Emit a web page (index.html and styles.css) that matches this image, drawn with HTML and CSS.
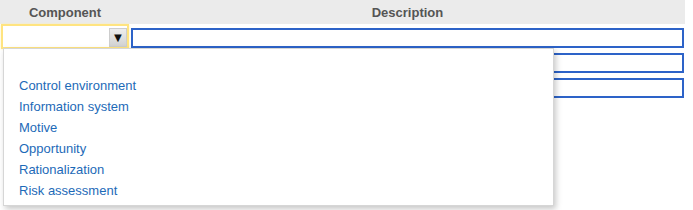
FILE: index.html
```html
<!DOCTYPE html>
<html lang="en">
<head>
    <meta charset="UTF-8">
    <title>Components</title>
    <link rel="stylesheet" href="styles.css">
</head>
<body>
    <div class="grid">
        <div class="head">Component</div>
        <div class="head">Description</div>

        <div class="cell cell-combo">
            <div class="combo focused">
                <span class="combo-text"></span>
                <span class="combo-btn">&#9660;</span>
            </div>
            <ul class="dropdown">
                <li class="empty">&nbsp;</li>
                <li>Control environment</li>
                <li>Information system</li>
                <li>Motive</li>
                <li>Opportunity</li>
                <li>Rationalization</li>
                <li>Risk assessment</li>
            </ul>
        </div>
        <div class="cell"><input class="desc" type="text"></div>

        <div class="cell"></div>
        <div class="cell"><input class="desc" type="text"></div>

        <div class="cell"></div>
        <div class="cell"><input class="desc" type="text"></div>
    </div>
</body>
</html>
```

FILE: styles.css
```css
* {
    margin: 0;
    padding: 0;
    box-sizing: border-box;
}

html, body {
    min-height: 210px;
}

body {
    font-family: "Liberation Sans", Arial, sans-serif;
    font-size: 13px;
    background: white;
}

.grid {
    display: grid;
    grid-template-columns: 130px 555px;
    grid-auto-rows: 25px;
    grid-template-rows: 24px;
    width: 685px;
}

.head {
    background: #ebebeb;
    color: #555;
    font-weight: bold;
    text-align: center;
    line-height: 26px;
}

.cell {
    padding: 0 1px;
}

.cell-combo {
    position: relative;
}

.combo {
    display: flex;
    justify-content: flex-end;
    height: 25px;
    width: 128px;
    background: white;
    border: 2px solid #ffe480;
    box-shadow: 0 0 2px #fff0b0;
    padding: 2px 0 1px 0;
}

.combo-btn {
    width: 18px;
    height: 19px;
    background: linear-gradient(#eeeeee, #d2d2d2);
    border: 1px solid #cdcdcd;
    color: #111;
    font-size: 13px;
    line-height: 18px;
    text-align: center;
}

.desc {
    display: block;
    width: 100%;
    height: 20px;
    margin-top: 4px;
    border: 2px solid #2d63c8;
    outline: none;
    background: white;
}

.dropdown {
    position: absolute;
    left: 3px;
    top: 24px;
    width: 551px;
    list-style: none;
    background: white;
    border: 1px solid #d6d6d6;
    box-shadow: 2px 3px 6px rgba(0,0,0,0.22);
    padding: 5px 0 4px 0;
    z-index: 10;
}

.dropdown li {
    line-height: 21px;
    padding-left: 15px;
    color: #1d6ab8;
    font-size: 13px;
}
```
